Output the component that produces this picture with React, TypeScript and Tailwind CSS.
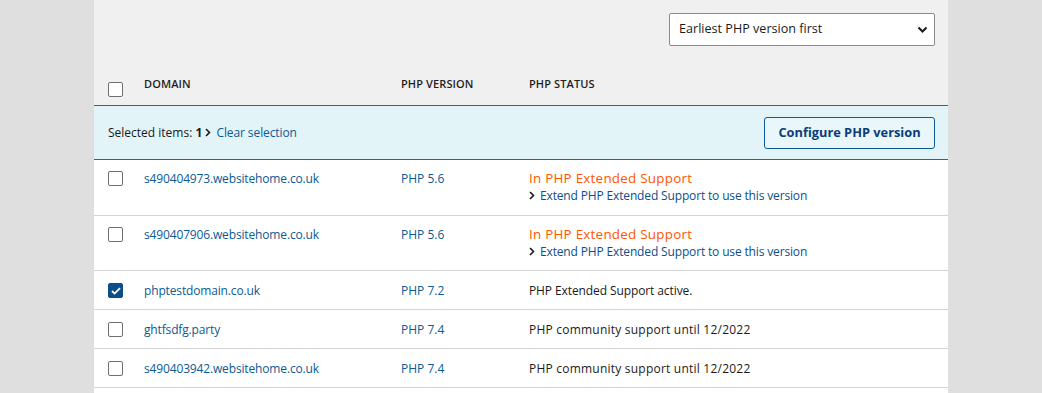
import React, { useState } from 'react';

type Row = {
  domain: string;
  version: string;
  status: string;
  extended?: boolean;
};

const rows: Row[] = [
  { domain: 's490404973.websitehome.co.uk', version: 'PHP 5.6', status: 'In PHP Extended Support', extended: true },
  { domain: 's490407906.websitehome.co.uk', version: 'PHP 5.6', status: 'In PHP Extended Support', extended: true },
  { domain: 'phptestdomain.co.uk', version: 'PHP 7.2', status: 'PHP Extended Support active.' },
  { domain: 'ghtfsdfg.party', version: 'PHP 7.4', status: 'PHP community support until 12/2022' },
  { domain: 's490403942.websitehome.co.uk', version: 'PHP 7.4', status: 'PHP community support until 12/2022' },
];

const Chevron = () => (
  <svg width="6" height="9" viewBox="0 0 6 9" className="inline-block mr-[5px] -mt-[2px]">
    <path d="M1 1l3.5 3.5L1 8" fill="none" stroke="currentColor" strokeWidth="1.6" />
  </svg>
);

const Checkbox = ({ checked, onClick }: { checked: boolean; onClick?: () => void }) => (
  <button
    onClick={onClick}
    className={`w-[15px] h-[15px] rounded-[2px] flex items-center justify-center shrink-0 ${
      checked ? 'bg-[#0b4f8a] border border-[#0b4f8a]' : 'bg-white border border-[#6f6f6f]'
    }`}
  >
    {checked && (
      <svg width="10" height="8" viewBox="0 0 10 8">
        <path d="M1 4l2.6 2.6L9 1.2" fill="none" stroke="white" strokeWidth="1.8" />
      </svg>
    )}
  </button>
);

export default function App() {
  const [selected, setSelected] = useState<number[]>([2]);

  const toggle = (i: number) =>
    setSelected((s) => (s.includes(i) ? s.filter((x) => x !== i) : [...s, i]));

  return (
    <div
      className="min-h-screen bg-[#dfdfdf] text-[12px] text-[#1a1a1a]"
      style={{ fontFamily: '"Open Sans", "Noto Sans", sans-serif' }}
    >
      <div className="w-[854px] mx-auto bg-white min-h-[393px]">
        {/* Toolbar + header */}
        <div className="bg-[#f0f0f0]">
          <div className="flex justify-end pt-[13px] pr-[13px]">
            <div className="relative w-[266px] h-[33px]">
              <select className="appearance-none w-full h-full bg-white border border-[#8a8a8a] rounded-[2px] pl-[9px] text-[12.6px] text-[#1a1a1a] outline-none">
                <option>Earliest PHP version first</option>
                <option>Latest PHP version first</option>
              </select>
              <svg
                width="11"
                height="8"
                viewBox="0 0 11 8"
                className="absolute right-[7px] top-[13px] pointer-events-none"
              >
                <path d="M1.5 1.5l4 4 4-4" fill="none" stroke="#1a1a1a" strokeWidth="2" />
              </svg>
            </div>
          </div>
          <div className="flex items-end h-[59px] pb-[8px] pl-[14px]">
            <div className="w-[36px]">
              <Checkbox checked={false} />
            </div>
            <div className="flex text-[11px] font-semibold uppercase tracking-[0.01em] text-[#1f1f1f] mb-[8px] leading-none">
              <div className="w-[257px]">Domain</div>
              <div className="w-[128px]">PHP Version</div>
              <div>PHP Status</div>
            </div>
          </div>
        </div>

        {/* Selection bar */}
        <div className="bg-[#e2f4f8] border-y border-[#1b6aa5] h-[55px] flex items-center justify-between pl-[14px] pr-[13px]">
          <div className="text-[12px]">
            Selected items: <span className="font-bold">{selected.length}</span>{' '}
            <button onClick={() => setSelected([])} className="text-[#0b5a94] tracking-[-0.1px]">
              <span className="text-[#1a1a1a]">
                <Chevron />
              </span>
              Clear selection
            </button>
          </div>
          <button className="h-[32px] w-[171px] border border-[#0b5a94] rounded-[3px] bg-[#e9f6fa] text-[#0b3d78] font-bold text-[12.8px]">
            Configure PHP version
          </button>
        </div>

        {/* Rows */}
        <div>
          {rows.map((r, i) => (
            <div
              key={i}
              className={`flex pl-[14px] border-b border-[#d3d3d3] leading-[17px] ${
                r.extended ? 'pt-[10px] pb-[10.5px]' : 'pt-[11px] pb-[10px]'
              }`}
            >
              <div className="w-[36px] pt-[1px]">
                <Checkbox checked={selected.includes(i)} onClick={() => toggle(i)} />
              </div>
              <div className="w-[257px] text-[#0b5a94] tracking-[-0.15px]">{r.domain}</div>
              <div className="w-[128px] text-[#0b5a94]">{r.version}</div>
              <div>
                {r.extended ? (
                  <>
                    <div className="text-[13.4px] tracking-[0.25px] text-[#ff5500]">{r.status}</div>
                    <div className="tracking-[-0.15px] text-[#0b4f8a]">
                      <span className="text-[#1a1a1a]">
                        <Chevron />
                      </span>
                      Extend PHP Extended Support to use this version
                    </div>
                  </>
                ) : (
                  <div className={i === 2 ? 'tracking-[-0.1px]' : 'tracking-[0.22px]'}>{r.status}</div>
                )}
              </div>
            </div>
          ))}
        </div>
      </div>
    </div>
  );
}
